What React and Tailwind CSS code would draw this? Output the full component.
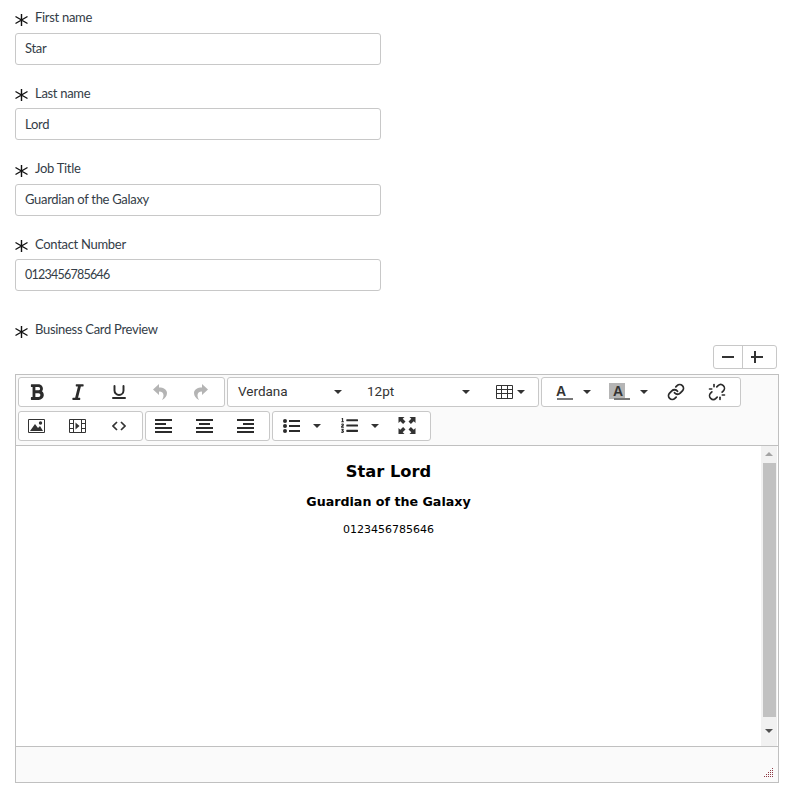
import React from 'react';
import { FaBold, FaItalic, FaListOl } from 'react-icons/fa';
import { Link, Unlink, Underline } from 'lucide-react';

const Star = () => (
  <svg width="13" height="12" viewBox="0 0 13 12" className="shrink-0 text-[#111]" stroke="currentColor" strokeWidth="1.4">
    <path d="M6.5 0V12M0.5 2.5L12.5 9.5M12.5 2.5L0.5 9.5" />
  </svg>
);

const Label = ({ children }) => (
  <div className="flex h-[23px] items-start">
    <span className="pt-[4px]"><Star /></span>
    <span className="ml-[7px] mt-[-0.6px] text-[13px] leading-[17px] tracking-[-0.3px] text-[#343d47]">{children}</span>
  </div>
);

const Field = ({ label, value, tight }) => (
  <div className="h-[75.4px]">
    <Label>{label}</Label>
    <div className={`flex h-[32px] w-[366px] items-center rounded-[3px] border border-[#c8c8c8] px-[9px] text-[#343d47] ${tight ? 'text-[12.5px] tracking-[-0.75px]' : 'text-[13px] tracking-[-0.3px]'}`}>
      {value}
    </div>
  </div>
);

const Caret = ({ className = '' }) => (
  <span className={`inline-block h-0 w-0 border-x-[4px] border-t-[4px] border-x-transparent border-t-[#333] ${className}`} />
);

const Btn = ({ children, className = '' }) => (
  <div className={`flex h-full w-[41px] items-center justify-center ${className}`}>{children}</div>
);

const Group = ({ children, className = '' }) => (
  <div className={`flex h-[30px] items-center rounded-[3px] border border-[#c8c8c8] bg-white ${className}`}>{children}</div>
);

const Align = ({ lines }) => (
  <svg width="17" height="14" viewBox="0 0 17 14" fill="#2b2b2b">
    {lines.map(([x, w], i) => (
      <rect key={i} x={x} y={i * 4} width={w} height="2" />
    ))}
  </svg>
);

const TableIcon = () => (
  <svg width="17" height="14" viewBox="0 0 17 14" fill="none" stroke="#333">
    <path d="M0.5 0.5H16.5V13.5H0.5ZM0.5 4.5H16.5M0.5 8.5H16.5M5.5 0.5V13.5M11.5 0.5V13.5" />
  </svg>
);

const UndoIcon = ({ flip }) => (
  <svg width="14" height="16" viewBox="0 0 14 16" fill="#b4b4b4" className={flip ? '-scale-x-100' : ''}>
    <path d="M6 0L0 5.5L6 11V7.5C9 7.5 10.5 9 10.5 11.5C10.5 13 10 14.5 9 16C12 14.5 14 12 14 9C14 5.5 10.5 3.5 6 3.5Z" />
  </svg>
);

const ImageIcon = () => (
  <svg width="17" height="14" viewBox="0 0 17 14">
    <path d="M0.5 0.5H16.5V13.5H0.5Z" fill="none" stroke="#333" />
    <path d="M2 12L7 5L10 9L12 7L15 12Z" fill="#333" />
    <circle cx="12.5" cy="4" r="1.7" fill="#333" />
  </svg>
);

const FilmIcon = () => (
  <svg width="17" height="14" viewBox="0 0 17 14">
    <path d="M0.5 0.5H16.5V13.5H0.5ZM4.5 0.5V13.5M12.5 0.5V13.5M0.5 4.5H4.5M0.5 9.5H4.5M12.5 4.5H16.5M12.5 9.5H16.5" fill="none" stroke="#333" />
    <path d="M6.5 3.5L10.5 7L6.5 10.5Z" fill="#333" />
  </svg>
);

const BulletIcon = () => (
  <svg width="17" height="14" viewBox="0 0 17 14" fill="#2b2b2b">
    {[2, 7, 12].map((y) => (
      <g key={y}>
        <circle cx="2" cy={y} r="2" />
        <rect x="6" y={y - 1} width="11" height="2" />
      </g>
    ))}
  </svg>
);

const TextColor = ({ bg }) => (
  <span className="relative flex h-[17px] w-[17px] items-start">
    {bg && <span className="absolute left-[-4px] top-0 h-[16px] w-[16px] bg-[#b5b5b5]" />}
    <span className="relative top-[1px] text-[14px] font-bold leading-[14px] text-[#333] [font-family:'Liberation_Sans',sans-serif]">A</span>
    <span className="absolute left-[1px] top-[15px] h-[2px] w-[16px] bg-[#777]" />
  </span>
);

const Fullscreen = () => (
  <svg width="18" height="17" viewBox="0 0 17 17" fill="#333">
    <path d="M0 0H6L4.2 1.8L7 4.6L4.6 7L1.8 4.2L0 6Z" />
    <path d="M17 0H11L12.8 1.8L10 4.6L12.4 7L15.2 4.2L17 6Z" />
    <path d="M0 17H6L4.2 15.2L7 12.4L4.6 10L1.8 12.8L0 11Z" />
    <path d="M17 17H11L12.8 15.2L10 12.4L12.4 10L15.2 12.8L17 11Z" />
  </svg>
);

const CodeIcon = () => (
  <svg width="14" height="10" viewBox="0 0 14 10" fill="none" stroke="#333" strokeWidth="1.7">
    <path d="M5 1L1 5L5 9M9 1L13 5L9 9" />
  </svg>
);

const Grip = () => (
  <div className="grid grid-cols-[repeat(5,1px)] grid-rows-[repeat(5,1px)] gap-[1px]">
    {[5, 9, 10, 13, 14, 15, 17, 18, 19, 20, 21, 22, 23, 24, 25].map((n) => (
      <span key={n} className="bg-[#8e3a45]" style={{ gridColumn: (n - 1) % 5 + 1, gridRow: Math.ceil(n / 5) }} />
    ))}
  </div>
);

export default function App() {
  return (
    <div className="h-[793px] w-[789px] overflow-hidden bg-white pl-[15px] pt-[10px] [font-family:'Lato',sans-serif]">
      <Field label="First name" value="Star" />
      <Field label="Last name" value="Lord" />
      <Field label="Job Title" value="Guardian of the Galaxy" />
      <Field label="Contact Number" value="0123456785646" tight />

      {/* Preview label */}
      <div className="pt-[10px]">
        <Label>Business Card Preview</Label>
      </div>

      <div className="mr-[12px] flex justify-end">
        <div className="flex h-[24px] w-[64px] rounded-[3px] border border-[#c8c8c8] text-[#333]">
          <div className="flex w-[29px] items-center justify-center border-r border-[#c8c8c8]">
            <span className="h-[2px] w-[12px] bg-[#333]" />
          </div>
          <div className="relative flex flex-1 items-center justify-center pr-[5px]">
            <span className="h-[2px] w-[12px] bg-[#333]" />
            <span className="absolute ml-[-5px] h-[12px] w-[2px] bg-[#333]" />
          </div>
        </div>
      </div>

      {/* Editor */}
      <div className="mt-[5px] flex h-[409px] w-[764px] flex-col border border-[#c0c0c0]">
        <div className="h-[71px] border-b border-[#c0c0c0] bg-[#fafafa] pl-[2px] pt-[2px]">
          <div className="flex gap-[2px]">
            <Group className="w-[207px]">
              <Btn className="ml-[-3px]"><FaBold size={18} color="#2b2b2b" /></Btn>
              <Btn><FaItalic size={18} color="#2b2b2b" /></Btn>
              <Btn><Underline size={18} color="#2b2b2b" strokeWidth={2.6} /></Btn>
              <Btn><UndoIcon /></Btn>
              <Btn><UndoIcon flip /></Btn>
            </Group>
            <Group className="w-[312px] text-[13.5px] text-[#333] [font-family:'Roboto',sans-serif]">
              <span className="ml-[10px] w-[96px]">Verdana</span>
              <Caret />
              <span className="ml-[25px] w-[95px]">12pt</span>
              <Caret />
              <span className="ml-[26px]"><TableIcon /></span>
              <Caret className="ml-[4px]" />
            </Group>
            <Group className="w-[200px]">
              <span className="ml-[14px]"><TextColor /></span>
              <Caret className="ml-[10px]" />
              <span className="ml-[22px]"><TextColor bg /></span>
              <Caret className="ml-[10px]" />
              <span className="ml-[19px]"><Link size={18} color="#2b2b2b" strokeWidth={2.4} /></span>
              <span className="ml-[23px]"><Unlink size={18} color="#2b2b2b" strokeWidth={2.2} /></span>
            </Group>
          </div>
          <div className="mt-[4px] flex gap-[2px]">
            <Group className="w-[125px]">
              <Btn className="ml-[-3px]"><ImageIcon /></Btn>
              <Btn><FilmIcon /></Btn>
              <Btn><CodeIcon /></Btn>
            </Group>
            <Group className="w-[125px]">
              <Btn className="ml-[-3px]"><Align lines={[[0, 17], [0, 11], [0, 17], [0, 17]]} /></Btn>
              <Btn><Align lines={[[0, 17], [3, 11], [0, 17], [0, 17]]} /></Btn>
              <Btn><Align lines={[[0, 17], [6, 11], [0, 17], [0, 17]]} /></Btn>
            </Group>
            <Group className="w-[159px]">
              <span className="ml-[10px]"><BulletIcon /></span>
              <Caret className="ml-[13px]" />
              <span className="ml-[20px]"><FaListOl size={17} color="#2b2b2b" /></span>
              <Caret className="ml-[13px]" />
              <span className="ml-[19px]"><Fullscreen /></span>
            </Group>
          </div>
        </div>

        <div className="flex h-[300px]">
          <div className="flex-1 pt-[15px] text-center text-black [font-family:'DejaVu_Sans',sans-serif]">
            <div className="text-[16.3px] font-bold leading-[21px]">Star Lord</div>
            <div className="mt-[12px] text-[12.67px] font-bold leading-[16px]">Guardian of the Galaxy</div>
            <div className="mt-[13px] text-[11px] leading-[13px]">0123456785646</div>
          </div>
          <div className="mr-[1px] flex w-[16px] flex-col items-center bg-[#f1f1f1]">
            <div className="flex h-[17px] items-center">
              <span className="h-0 w-0 border-x-[4px] border-b-[4px] border-x-transparent border-b-[#a3a3a3]" />
            </div>
            <div className="h-[254px] w-[13px] bg-[#c1c1c1]" />
            <div className="flex flex-1 items-center">
              <span className="h-0 w-0 border-x-[4px] border-t-[4px] border-x-transparent border-t-[#505050]" />
            </div>
          </div>
        </div>

        <div className="flex flex-1 items-end justify-end border-t border-[#c0c0c0] bg-[#fafafa] pb-[5px] pr-[5px]">
          <Grip />
        </div>
      </div>
    </div>
  );
}
